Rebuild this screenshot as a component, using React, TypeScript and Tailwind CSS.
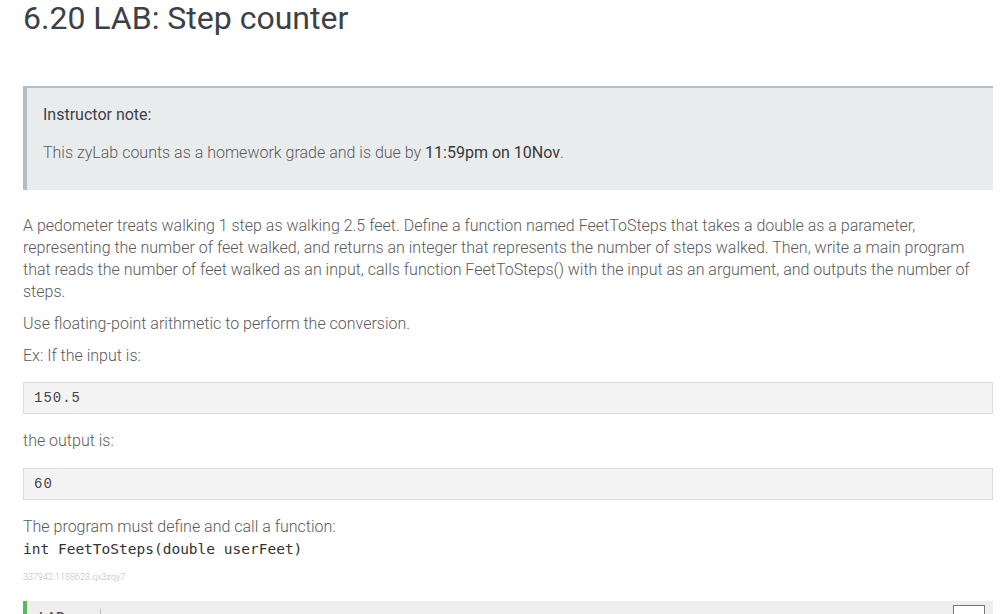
export default function App() {
  const body = "font-['Roboto',sans-serif]";
  return (
    <div className={`${body} w-[1003px] h-[614px] overflow-hidden bg-white text-[#5a5a5a]`}>
      <div className="pl-[23px] pr-[10px]">
        <h1 className="text-[32px] leading-[38px] text-[#3c4148] font-normal pt-0 -mt-[1px]">6.20 LAB: Step counter</h1>

        <div className="mt-[49px] bg-[#e9eced] border-l-[4px] border-t-[2px] border-[#b3bec4] pl-[16px] pt-[16px] pb-[26px]">
          <div className="text-[16px] leading-[22px] text-[#3c4148] font-normal">Instructor note:</div>
          <div className="mt-[16px] text-[16px] leading-[22px] font-light text-[#5a5a5a]">
            This zyLab counts as a homework grade and is due by <span className="font-normal text-[#3a3a3a]">11:59pm on 10Nov</span>.
          </div>
        </div>

        <p className="mt-[25px] text-[16px] leading-[22px] font-light pr-[20px]">
          A pedometer treats walking 1 step as walking 2.5 feet. Define a function named FeetToSteps that takes a double as a parameter, representing the number of feet walked, and returns an integer that represents the number of steps walked. Then, write a main program that reads the number of feet walked as an input, calls function FeetToSteps() with the input as an argument, and outputs the number of steps.
        </p>
        <p className="mt-[10px] text-[16px] leading-[22px] font-light">Use floating-point arithmetic to perform the conversion.</p>
        <p className="mt-[10px] text-[16px] leading-[22px] font-light">Ex: If the input is:</p>

        <div className="mt-[15px] h-[32px] bg-[#f4f4f4] border border-[#dcdcdc] pl-[10px] flex items-center font-['Liberation_Mono',monospace] text-[14px] tracking-[1px] text-[#444]">150.5</div>

        <p className="mt-[16px] text-[16px] leading-[22px] font-light">the output is:</p>
        <div className="mt-[16px] h-[32px] bg-[#f4f4f4] border border-[#dcdcdc] pl-[10px] flex items-center font-['Liberation_Mono',monospace] text-[14px] tracking-[1px] text-[#444]">60</div>

        <p className="mt-[16px] text-[16px] leading-[22px] font-light">The program must define and call a function:</p>
        <div className="font-['DejaVu_Sans_Mono',monospace] text-[14.5px] leading-[22px] text-[#333]">int FeetToSteps(double userFeet)</div>

        <div className="mt-[11px] text-[9px] leading-[12px] text-[#bbb] font-light">337942.1188628.qx3zqy7</div>

        <div className="mt-[18px] relative h-[40px] bg-[#eeeeee] border-l-[4px] border-[#5cb85c]">
          <span className="absolute left-[12px] top-[7px] text-[14px] text-[#555] font-medium">LAB</span>
          <span className="absolute left-[73px] top-[8px] w-px h-[20px] bg-[#bbb]" />
          <span className="absolute right-[8px] top-[4px] w-[32px] h-[28px] border border-[#777] bg-white" />
        </div>
      </div>
    </div>
  );
}
